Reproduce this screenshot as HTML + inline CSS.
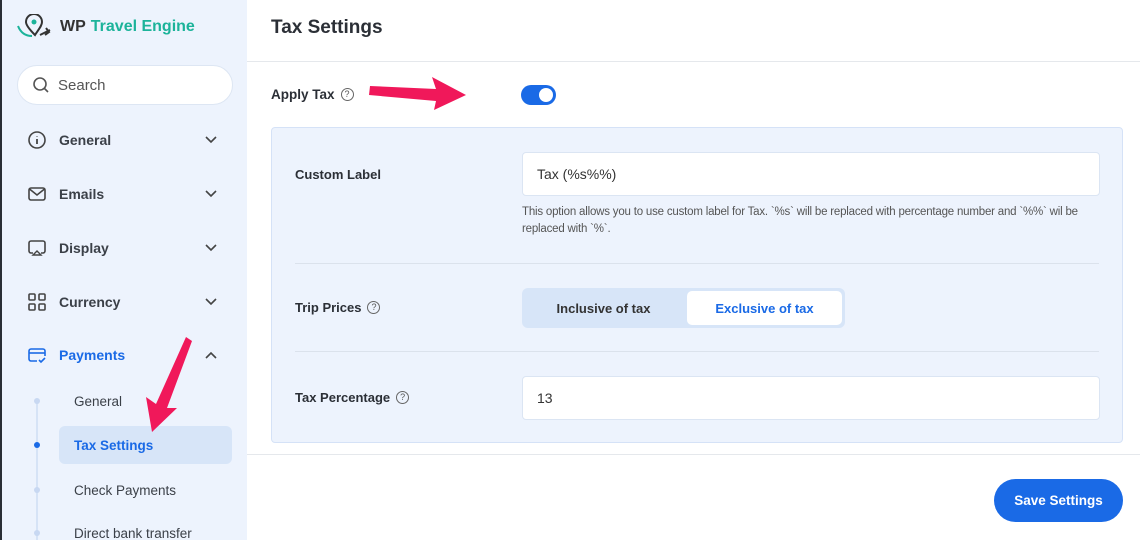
<!DOCTYPE html>
<html><head><meta charset="utf-8"><style>
*{box-sizing:border-box;margin:0;padding:0}
body{width:1140px;height:540px;overflow:hidden;font-family:"Liberation Sans",sans-serif;background:#fff;position:relative;color:#2b2f36}
.sb{position:absolute;left:0;top:0;width:247px;height:540px;background:#edf3fd}
.edge{position:absolute;left:0;top:0;width:2px;height:540px;background:#2a2e35}
.logo{position:absolute;left:16px;top:14px;display:flex;align-items:center;font-weight:bold;font-size:16px}
.search{position:absolute;left:17px;top:65px;width:216px;height:40px;border-radius:20px;background:#fff;border:1px solid #dde6f3;display:flex;align-items:center;padding-left:14px;font-size:15px;color:#555}
.nav{position:absolute;left:27px;display:flex;align-items:center;font-size:14px;font-weight:bold;color:#3b4048;width:192px}
.nav svg.i{margin-right:12px}
.nav .ch{position:absolute;right:2px}
.sub{position:absolute;left:74px;font-size:13.5px;color:#3b4048}
.dot{position:absolute;left:34px;width:6px;height:6px;border-radius:50%;background:#c8d8f2}
.main{position:absolute;left:247px;top:0;right:0;bottom:0}
h1{position:absolute;left:24px;top:17px;font-size:19px;font-weight:bold;color:#2b2f36}
.hr{position:absolute;left:0;right:0;height:1px;background:#e5e8ec}
.lbl{position:absolute;font-size:13px;font-weight:bold;color:#2b2f36;display:flex;align-items:center}
.q{display:inline-block;width:13px;height:13px;border:1px solid #666;border-radius:50%;font-size:9px;text-align:center;line-height:11px;margin-left:6px;font-weight:normal;color:#555}
.card{position:absolute;left:24px;top:127px;width:852px;height:316px;background:#edf3fd;border:1px solid #d5e2f7;border-radius:4px}
.inp{position:absolute;background:#fff;border:1px solid #dbe5f3;border-radius:4px;font-size:14px;color:#333;padding-left:14px;display:flex;align-items:center}
</style></head><body>
<div class="sb">
 <div class="logo">
  <svg width="40" height="26" viewBox="0 0 40 26"><path d="M2 12 Q6 22 16 22" stroke="#1cb39a" stroke-width="2" fill="none"/><path d="M19 21 C12 14 10 10 10 8 A8 8 0 0 1 26 8 C26 12 22 16 19 21Z" stroke="#333" stroke-width="2" fill="none"/><circle cx="18" cy="8" r="2.5" fill="#1cb39a"/><path d="M24 21 L34 16 M30 14 L33 18 L29 21" stroke="#333" stroke-width="2" fill="none"/></svg>
  <span style="color:#333;margin-left:4px">WP</span><span style="color:#1cb39a;margin-left:5px">Travel Engine</span>
 </div>
 <div class="search"><svg width="18" height="18" viewBox="0 0 18 18"><circle cx="8" cy="8" r="6" stroke="#555" stroke-width="1.6" fill="none"/><path d="M12.5 12.5L16 16" stroke="#555" stroke-width="1.6"/></svg><span style="margin-left:8px">Search</span></div>
 <div class="nav" style="top:130px"><svg class="i" width="20" height="20" viewBox="0 0 20 20"><circle cx="10" cy="10" r="8" stroke="#444" stroke-width="1.6" fill="none"/><path d="M10 9v5M10 6v.5" stroke="#444" stroke-width="1.8"/></svg>General<svg class="ch" width="12" height="8" viewBox="0 0 12 8"><path d="M1 1l5 5 5-5" stroke="#444" stroke-width="1.6" fill="none"/></svg></div>
 <div class="nav" style="top:184px"><svg class="i" width="20" height="20" viewBox="0 0 20 20"><rect x="2" y="4" width="16" height="12" rx="2" stroke="#444" stroke-width="1.6" fill="none"/><path d="M2.5 5l7.5 6 7.5-6" stroke="#444" stroke-width="1.6" fill="none"/></svg>Emails<svg class="ch" width="12" height="8" viewBox="0 0 12 8"><path d="M1 1l5 5 5-5" stroke="#444" stroke-width="1.6" fill="none"/></svg></div>
 <div class="nav" style="top:238px"><svg class="i" width="20" height="20" viewBox="0 0 20 20"><path d="M6 15H4a2 2 0 0 1-2-2V5a2 2 0 0 1 2-2h12a2 2 0 0 1 2 2v8a2 2 0 0 1-2 2h-2" stroke="#444" stroke-width="1.6" fill="none"/><path d="M6 17l4-4 4 4z" stroke="#444" stroke-width="1.4" fill="none"/></svg>Display<svg class="ch" width="12" height="8" viewBox="0 0 12 8"><path d="M1 1l5 5 5-5" stroke="#444" stroke-width="1.6" fill="none"/></svg></div>
 <div class="nav" style="top:292px"><svg class="i" width="20" height="20" viewBox="0 0 20 20"><g stroke="#444" stroke-width="1.6" fill="none"><rect x="2" y="2" width="6" height="6" rx="1"/><rect x="12" y="2" width="6" height="6" rx="1"/><rect x="2" y="12" width="6" height="6" rx="1"/><rect x="12" y="12" width="6" height="6" rx="1"/></g></svg>Currency<svg class="ch" width="12" height="8" viewBox="0 0 12 8"><path d="M1 1l5 5 5-5" stroke="#444" stroke-width="1.6" fill="none"/></svg></div>
 <div class="nav" style="top:345px;color:#1a6ae6"><svg class="i" width="20" height="20" viewBox="0 0 20 20"><g stroke="#1a6ae6" stroke-width="1.6" fill="none"><path d="M10 16H4a2 2 0 0 1-2-2V6a2 2 0 0 1 2-2h12a2 2 0 0 1 2 2v5"/><path d="M2 8h16"/><path d="M12 15l2 2 4-4"/></g></svg>Payments<svg class="ch" width="12" height="8" viewBox="0 0 12 8"><path d="M1 7l5-5 5 5" stroke="#444" stroke-width="1.6" fill="none"/></svg></div>
 <div style="position:absolute;left:36px;top:400px;width:2px;height:140px;background:#d6e3f6"></div>
 <div class="dot" style="top:398px"></div>
 <div class="dot" style="top:442px;background:#1a6ae6"></div>
 <div class="dot" style="top:487px"></div>
 <div class="dot" style="top:530px"></div>
 <div class="sub" style="top:394px">General</div>
 <div style="position:absolute;left:59px;top:426px;width:173px;height:38px;border-radius:6px;background:#d7e5f8"></div>
 <div class="sub" style="top:438px;color:#1a6ae6;font-weight:bold">Tax Settings</div>
 <div class="sub" style="top:483px">Check Payments</div>
 <div class="sub" style="top:526px">Direct bank transfer</div>
</div>
<div class="edge"></div>
<div class="main">
 <h1>Tax Settings</h1>
 <div class="hr" style="top:61px"></div>
 <div class="lbl" style="left:24px;top:87px;font-size:13.5px">Apply Tax<span class="q">?</span></div>
 <div style="position:absolute;left:274px;top:85px;width:35px;height:20px;border-radius:10px;background:#1a6ae6"><div style="position:absolute;right:3px;top:3px;width:14px;height:14px;border-radius:50%;background:#fff"></div></div>
 <div class="card">
  <div class="lbl" style="left:23px;top:39px">Custom Label</div>
  <div class="inp" style="left:250px;top:24px;width:578px;height:44px">Tax (%s%%)</div>
  <div style="position:absolute;left:250px;top:76px;width:565px;font-size:11.5px;line-height:17px;color:#555;letter-spacing:-0.2px">This option allows you to use custom label for Tax. `%s` will be replaced with percentage number and `%%` wil be replaced with `%`.</div>
  <div style="position:absolute;left:23px;right:23px;top:135px;height:1px;background:#dbe2ec"></div>
  <div class="lbl" style="left:23px;top:172px">Trip Prices<span class="q">?</span></div>
  <div style="position:absolute;left:250px;top:160px;width:323px;height:40px;border-radius:6px;background:#d7e5f8"><div style="position:absolute;left:0;top:0;width:163px;height:40px;display:flex;align-items:center;justify-content:center;font-size:13px;font-weight:bold;color:#333">Inclusive of tax</div><div style="position:absolute;left:165px;top:3px;width:155px;height:34px;border-radius:5px;background:#fff;display:flex;align-items:center;justify-content:center;font-size:13px;font-weight:bold;color:#1a6ae6">Exclusive of tax</div></div>
  <div style="position:absolute;left:23px;right:23px;top:223px;height:1px;background:#dbe2ec"></div>
  <div class="lbl" style="left:23px;top:262px">Tax Percentage<span class="q">?</span></div>
  <div class="inp" style="left:250px;top:248px;width:578px;height:44px">13</div>
 </div>
 <div class="hr" style="top:454px"></div>
 <div style="position:absolute;left:747px;top:479px;width:129px;height:43px;border-radius:22px;background:#1a6ae6;color:#fff;font-weight:bold;font-size:13.5px;display:flex;align-items:center;justify-content:center">Save Settings</div>
</div>
<svg style="position:absolute;left:0;top:0" width="1140" height="540">
 <path d="M370 86 L436 89 L432 77 L466 95 L434 110 L436 101 L369 95 Z" fill="#f0185a"/>
 <path d="M186 337 L192 341 L167 408 L177 408 L152 432 L146 397 L156 404 Z" fill="#f0185a"/>
</svg>
</body></html>
